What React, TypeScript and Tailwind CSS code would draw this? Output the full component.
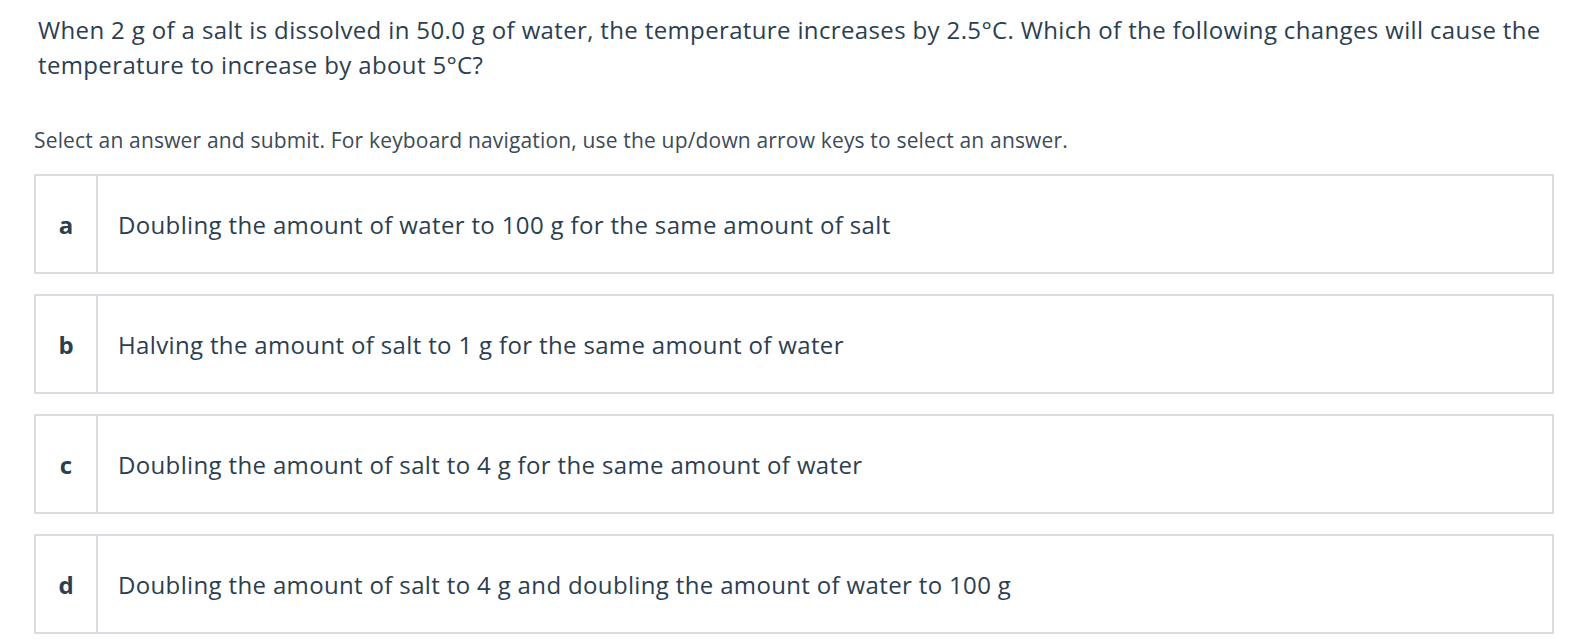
import React from "react";

const options = [
  { letter: "a", text: "Doubling the amount of water to 100 g for the same amount of salt" },
  { letter: "b", text: "Halving the amount of salt to 1 g for the same amount of water" },
  { letter: "c", text: "Doubling the amount of salt to 4 g for the same amount of water" },
  { letter: "d", text: "Doubling the amount of salt to 4 g and doubling the amount of water to 100 g" },
];

export default function App() {
  return (
    <div
      className="min-h-[644px] bg-white pl-[34px] pr-[28px] pt-[12px] text-[#2c3e50]"
      style={{ fontFamily: "'Open Sans', 'Noto Sans', sans-serif" }}
    >
      <p className="pl-[4px] text-[24px] leading-[35px] tracking-[0.36px]">
        When 2 g of a salt is dissolved in 50.0 g of water, the temperature increases by 2.5°C. Which of the following changes will cause the temperature to increase by about 5°C?
      </p>
      <p className="mt-[43px] text-[21px] leading-[30px] tracking-[0.17px] text-[#3d4a58]">
        Select an answer and submit. For keyboard navigation, use the up/down arrow keys to select an answer.
      </p>
      <div className="mt-[19px] flex flex-col gap-[20px]">
        {options.map((o) => (
          <div key={o.letter} className="flex h-[100px] border-2 border-[#d9dde2] bg-white">
            <div className="flex w-[62px] shrink-0 items-center justify-center border-r-2 border-[#d9dde2] pt-[2px] text-[24px] font-bold">
              {o.letter}
            </div>
            <div className="flex items-center pl-[20px] pt-[2px] text-[24px] tracking-[0.35px]">{o.text}</div>
          </div>
        ))}
      </div>
    </div>
  );
}
